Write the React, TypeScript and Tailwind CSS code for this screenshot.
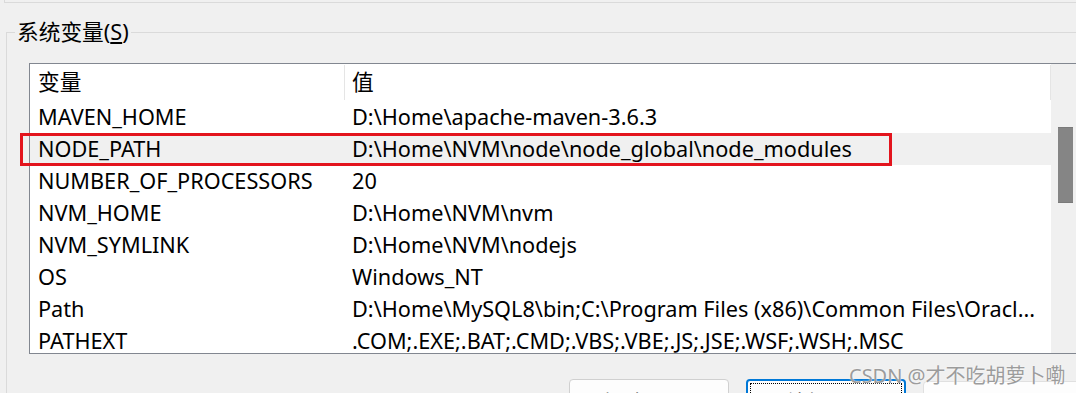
const rows: [string, string][] = [
  ['MAVEN_HOME', 'D:\\Home\\apache-maven-3.6.3'],
  ['NODE_PATH', 'D:\\Home\\NVM\\node\\node_global\\node_modules'],
  ['NUMBER_OF_PROCESSORS', '20'],
  ['NVM_HOME', 'D:\\Home\\NVM\\nvm'],
  ['NVM_SYMLINK', 'D:\\Home\\NVM\\nodejs'],
  ['OS', 'Windows_NT'],
  ['Path', 'D:\\Home\\MySQL8\\bin;C:\\Program Files (x86)\\Common Files\\Oracl...'],
  ['PATHEXT', '.COM;.EXE;.BAT;.CMD;.VBS;.VBE;.JS;.JSE;.WSF;.WSH;.MSC'],
];

const font = { fontFamily: '"Noto Sans", "Noto Sans CJK SC", sans-serif' };

export default function App() {
  return (
    <div
      className="relative w-[1076px] h-[393px] overflow-hidden bg-[#f0f0f0] text-[21.7px] text-black"
      style={font}
    >
      {/* bottom edge of the group above */}
      <div className="ml-[4px] h-[3px] border-l border-b border-[#dadada]" />

      {/* 系统变量 group */}
      <fieldset className="mt-[18px] ml-[6px] border-t border-l border-[#dadada]">
        <legend className="ml-[8px] px-[2px] leading-[22px]">
          系统变量(<u className="underline-offset-2">S</u>)
        </legend>

        <div className="mt-[20px] ml-[22px] w-[1052px] h-[291px] border border-[#828790] bg-white flex">
          <div className="flex-1 flex flex-col">
            {/* header */}
            <div className="h-[37px] flex items-center shrink-0">
              <div className="w-[314px] pl-[8px]">变量</div>
              <div className="w-px h-[35px] bg-[#e5e5e5]" />
              <div className="flex-1 pl-[7px]">值</div>
              <div className="w-px h-[35px] bg-[#e5e5e5]" />
            </div>
            {rows.map(([name, value]) => (
              <div
                key={name}
                className={`h-[32px] flex items-center shrink-0 whitespace-nowrap ${
                  name === 'NODE_PATH' ? 'bg-[#f0f0f0]' : ''
                }`}
              >
                <div className="w-[315px] pl-[8px]">{name}</div>
                <div className="flex-1 pl-[7px]">{value}</div>
              </div>
            ))}
          </div>
          {/* scrollbar */}
          <div className="w-[29px] bg-[#f0f0f0] shrink-0">
            <div className="mt-[63px] ml-[7px] w-[15px] h-[76px] bg-[#858585] border-y border-[#7a7a7a]" />
          </div>
        </div>

        {/* buttons */}
        <div className="mt-[25px] ml-[562px] flex gap-[17px] leading-[24px]">
          <button className="w-[160px] h-[48px] rounded-[4px] border border-[#d0d0d0] bg-[#fdfdfd] flex items-center justify-center">
            新建(W)...
          </button>
          <button className="w-[160px] h-[48px] rounded-[4px] border-2 border-[#0078d7] bg-[#fdfdfd] p-[2px]">
            <span className="w-full h-full border border-dotted border-black flex items-center justify-center">
              编辑(I)...
            </span>
          </button>
          <button className="w-[160px] h-[48px] mt-[2px] rounded-[4px] border border-[#e0e0e0] bg-[#fdfdfd] flex items-center justify-center">
            删除(L)
          </button>
        </div>
      </fieldset>

      {/* red annotation box */}
      <div className="absolute left-[20px] top-[133px] w-[872px] h-[33px] border-[3px] border-[#e3141d]" />

      {/* watermark */}
      <div className="absolute left-[849px] top-[361px] text-[20px] text-[#9c9c9c] whitespace-nowrap [text-shadow:0_0_2px_#fff]">
        CSDN @才不吃胡萝卜嘞
      </div>
    </div>
  );
}
